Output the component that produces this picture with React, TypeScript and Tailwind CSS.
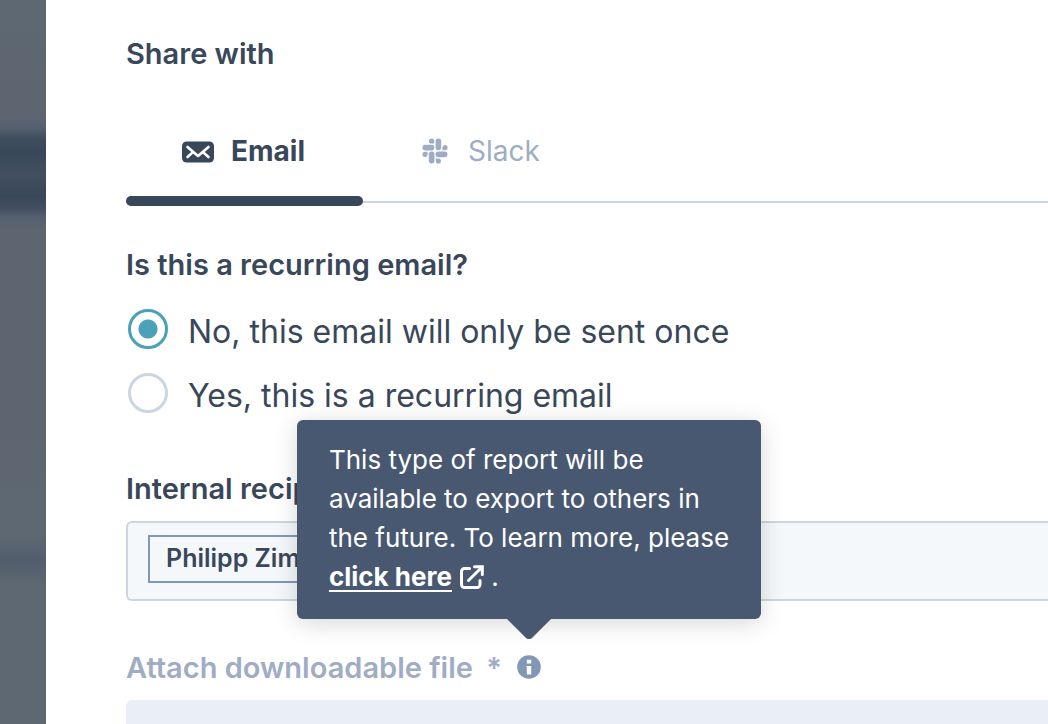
import { useState } from 'react';
import type { ReactNode } from 'react';

type ShareChannel = 'email' | 'slack';

type RecurrenceOption = {
  value: 'once' | 'recurring';
  label: string;
};

const RECURRENCE_OPTIONS: RecurrenceOption[] = [
  { value: 'once', label: 'No, this email will only be sent once' },
  { value: 'recurring', label: 'Yes, this is a recurring email' },
];

function EmailIcon() {
  return (
    <svg aria-hidden="true" className="mt-0.5 h-[22px] w-8" fill="none" viewBox="0 0 32 22">
      <rect fill="currentColor" height="21" rx="4.5" width="32" y="0.5" />
      <path
        d="M5.5 6 16 15 26.5 6M5.5 16l5.2-4.6M26.5 16l-5.2-4.6"
        stroke="white"
        strokeLinecap="round"
        strokeLinejoin="round"
        strokeWidth="2.6"
      />
    </svg>
  );
}

function SlackIcon() {
  return (
    <svg aria-hidden="true" className="h-[26px] w-8" fill="currentColor" viewBox="-3 0 32 26">
      <rect height="11.8" rx="2.7" width="5.6" x="13.6" y="0.5" />
      <rect height="5.6" rx="2.7" width="11.8" x="0.5" y="6.8" />
      <rect height="11.8" rx="2.7" width="5.6" x="6.8" y="13.6" />
      <rect height="5.6" rx="2.7" width="11.8" x="13.6" y="13.6" />
      <path d="M12.2 5.6H9.5a2.6 2.6 0 1 1 2.7-2.6z" />
      <path d="M20.4 12.2V9.5a2.6 2.6 0 1 1 2.6 2.7z" />
      <path d="M13.8 20.4h2.7a2.6 2.6 0 1 1-2.7 2.6z" />
      <path d="M5.6 13.8v2.7A2.6 2.6 0 1 1 3 13.8z" />
    </svg>
  );
}

function ExternalLinkIcon() {
  return (
    <svg
      aria-hidden="true"
      className="ml-2 inline-block size-6 align-[-3px]"
      fill="none"
      stroke="currentColor"
      strokeLinecap="round"
      strokeLinejoin="round"
      strokeWidth="3"
      viewBox="0 0 24 24"
    >
      <path d="M9.5 3.5h-5a3 3 0 0 0-3 3v13a3 3 0 0 0 3 3H17a3 3 0 0 0 3-3V15.500" />
      <path d="M14.500 1.700h7.800v7.800M22 2 8.500 15.500" strokeLinejoin="miter" />
    </svg>
  );
}

function InfoIcon() {
  return (
    <svg aria-hidden="true" className="size-6" viewBox="0 0 24 24">
      <circle cx="12" cy="12" fill="#8197b6" r="11.8" />
      <path d="M9.8 4.7h4.4v3.9H9.8zM9.2 11h5v8.500H9.8v-7.500h-.6z" fill="white" />
    </svg>
  );
}

function TabButton({
  active,
  icon,
  label,
  onClick,
}: {
  active: boolean;
  icon: ReactNode;
  label: string;
  onClick: () => void;
}) {
  return (
    <button
      aria-selected={active}
      className={`relative flex h-full min-w-[237px] items-center gap-[17px] px-14 text-[28px] leading-9 ${
        active ? 'font-bold text-[#39475a]' : 'text-[#9fadc4]'
      }`}
      onClick={onClick}
      role="tab"
      type="button"
    >
      {icon}
      {label}
      {active ? (
        <span className="absolute inset-x-0 -bottom-[5px] h-2.5 rounded-full bg-[#39475a]" />
      ) : null}
    </button>
  );
}

function ExportTooltip() {
  return (
    <div
      className="absolute bottom-full left-1/2 z-10 mb-9 w-[464px] -translate-x-1/2 rounded-md bg-[#485871] pt-5 pr-5 pb-[23px] pl-8 text-[26px] leading-[39px] font-normal text-white shadow-[0_4px_24px_rgba(0,0,0,0.16)]"
      role="tooltip"
    >
      This type of report will be available to export to others in the future. To learn more, please{' '}
      <a className="font-bold underline decoration-2 underline-offset-4" href="#learn-more">
        click here
      </a>
      <ExternalLinkIcon /> .
      <svg
        aria-hidden="true"
        className="absolute top-full left-1/2 h-5 w-11 -translate-x-1/2"
        viewBox="0 0 44 20"
      >
        <path d="M0 0h44L25 19q-3 2.500-6 0z" fill="#485871" />
      </svg>
    </div>
  );
}

export default function App() {
  const [channel, setChannel] = useState<ShareChannel>('email');
  const [recurrence, setRecurrence] = useState<RecurrenceOption['value']>('once');

  return (
    <div className="flex h-screen overflow-hidden bg-white font-[Inter,'Liberation_Sans',sans-serif] text-[#39475a]">
      <aside className="w-[46px] shrink-0 bg-[linear-gradient(#5e6873_0px,#5c6570_118px,#556070_128px,#404d5f_138px,#39475a_152px,#434f60_174px,#39475a_196px,#424e60_208px,#556070_217px,#5c6570_230px,#5c6570_390px,#5e6873_535px,#535e6d_560px,#5e6873_585px)]" />

      <main className="min-w-0 flex-1 pt-9 pl-20">
        <h2 className="text-[29px] leading-9 font-semibold">Share with</h2>

        <div className="mt-7 flex h-[103px] border-b-2 border-[#cbd6e2]" role="tablist">
          <TabButton
            active={channel === 'email'}
            icon={<EmailIcon />}
            label="Email"
            onClick={() => setChannel('email')}
          />
          <TabButton
            active={channel === 'slack'}
            icon={<SlackIcon />}
            label="Slack"
            onClick={() => setChannel('slack')}
          />
        </div>

        <fieldset className="mt-11">
          <legend className="mb-3.5 text-[29px] leading-9 font-semibold">
            Is this a recurring email?
          </legend>
          {RECURRENCE_OPTIONS.map((option) => (
            <label className="flex h-16 items-center gap-5 text-[32px]" key={option.value}>
              <input
                checked={recurrence === option.value}
                className="ml-0.5 size-10 shrink-0 appearance-none rounded-full border-3 border-[#cbd6e2] bg-white checked:border-[#4ba0ba] checked:bg-[radial-gradient(circle,#4ba0ba_9px,white_10px)]"
                name="recurrence"
                onChange={() => setRecurrence(option.value)}
                type="radio"
                value={option.value}
              />
              <span className="pt-1.5">{option.label}</span>
            </label>
          ))}
        </fieldset>

        <label
          className="mt-[46px] block text-[29px] leading-9 font-semibold"
          htmlFor="recipients"
        >
          Internal recipients
        </label>
        <div className="mt-3.5 flex h-20 items-start rounded-l-md border-2 border-r-0 border-[#cbd6e2] bg-[#f5f8fa] px-5 pt-3">
          <span className="flex h-12 items-center border-2 border-[#8197b6] px-4 text-[25px] font-semibold">
            Philipp Zimmer
          </span>
          <input
            className="h-12 min-w-0 flex-1 bg-transparent px-4 text-[25px] outline-none"
            id="recipients"
          />
        </div>

        <div className="mt-[49px] flex items-center text-[29px] leading-9 font-semibold text-[#9fadc4]">
          <label htmlFor="attachment">
            Attach downloadable file <span className="ml-1.5">*</span>
          </label>
          <div className="relative mb-0.5 ml-[15px]">
            <button aria-label="More information" className="block" type="button">
              <InfoIcon />
            </button>
            <ExportTooltip />
          </div>
        </div>
        <select
          className="mt-3.5 block h-20 w-full appearance-none rounded-l-md bg-[#eaeef6]"
          disabled
          id="attachment"
        />
      </main>
    </div>
  );
}
